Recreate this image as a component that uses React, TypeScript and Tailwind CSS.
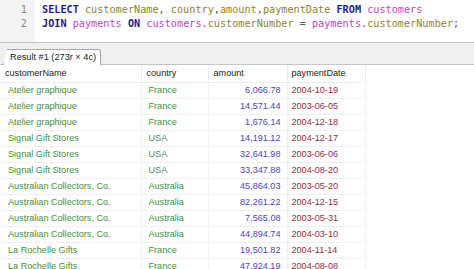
import React from 'react'

type Row = { name: string; country: string; amount: string; date: string }

const rows: Row[] = [
  { name: 'Atelier graphique', country: 'France', amount: '6,066.78', date: '2004-10-19' },
  { name: 'Atelier graphique', country: 'France', amount: '14,571.44', date: '2003-06-05' },
  { name: 'Atelier graphique', country: 'France', amount: '1,676.14', date: '2004-12-18' },
  { name: 'Signal Gift Stores', country: 'USA', amount: '14,191.12', date: '2004-12-17' },
  { name: 'Signal Gift Stores', country: 'USA', amount: '32,641.98', date: '2003-06-06' },
  { name: 'Signal Gift Stores', country: 'USA', amount: '33,347.88', date: '2004-08-20' },
  { name: 'Australian Collectors, Co.', country: 'Australia', amount: '45,864.03', date: '2003-05-20' },
  { name: 'Australian Collectors, Co.', country: 'Australia', amount: '82,261.22', date: '2004-12-15' },
  { name: 'Australian Collectors, Co.', country: 'Australia', amount: '7,565.08', date: '2003-05-31' },
  { name: 'Australian Collectors, Co.', country: 'Australia', amount: '44,894.74', date: '2004-03-10' },
  { name: 'La Rochelle Gifts', country: 'France', amount: '19,501.82', date: '2004-11-14' },
  { name: 'La Rochelle Gifts', country: 'France', amount: '47,924.19', date: '2004-08-08' }
]

const kw = 'font-bold text-[#1c1c8c]'
const id = 'text-[#8c8232]'
const tbl = 'text-[#c23fc2]'
const op = 'text-[#555555]'

function Editor(): JSX.Element {
  return (
    <div className="flex h-[42px] bg-white font-['DejaVu_Sans_Mono',monospace] text-[10.2px] leading-[14px]">
      <div className="w-[35px] bg-[#f3f3f3] pt-[3px] pr-[8px] text-right text-[#8a8a8a]">
        <div>1</div>
        <div>2</div>
      </div>
      <div className="pl-[7px] pt-[3px] whitespace-pre">
        <div>
          <span className={kw}>SELECT</span> <span className={id}>customerName</span>
          <span className={op}>, </span>
          <span className={id}>country</span>
          <span className={op}>,</span>
          <span className={id}>amount</span>
          <span className={op}>,</span>
          <span className={id}>paymentDate</span> <span className={kw}>FROM</span>{' '}
          <span className={tbl}>customers</span>
        </div>
        <div>
          <span className={kw}>JOIN</span> <span className={tbl}>payments</span> <span className={kw}>ON</span>{' '}
          <span className={tbl}>customers</span>
          <span className={op}>.</span>
          <span className={id}>customerNumber</span>
          <span className={op}> = </span>
          <span className={tbl}>payments</span>
          <span className={op}>.</span>
          <span className={id}>customerNumber</span>
          <span className={op}>;</span>
        </div>
      </div>
    </div>
  )
}

function ResultTabs(): JSX.Element {
  return (
    <div className="flex h-[23px] items-end border-t border-b border-[#c6c6c6] bg-[#efefef] pl-[3px]">
      <div className="relative -mb-px flex h-[16px] items-center rounded-tr-[3px] border border-b-0 border-[#a9a9a9] bg-white pl-[6px] pr-[4px] text-[9.2px] text-[#1a1a1a] [clip-path:polygon(4px_0,100%_0,100%_100%,0_100%)]">
        Result #1 (273r × 4c)
      </div>
    </div>
  )
}

export default function App(): JSX.Element {
  return (
    <div className="h-[269px] w-[474px] overflow-hidden bg-white font-['Liberation_Sans',Arial,sans-serif]">
      <Editor />
      <ResultTabs />
      <table className="border-collapse text-[9.1px] leading-[15px]">
        <thead>
          <tr className="h-[17px] text-[#222222]">
            <th className="w-[141px] border-r border-b border-[#ececec] pl-[5px] text-left font-normal">customerName</th>
            <th className="w-[67px] border-r border-b border-[#ececec] pl-[5px] text-left font-normal">country</th>
            <th className="w-[79px] border-r border-b border-[#ececec] pl-[5px] text-left font-normal">amount</th>
            <th className="w-[78px] border-r border-b border-[#ececec] pl-[4px] text-left font-normal">paymentDate</th>
          </tr>
        </thead>
        <tbody>
          {rows.map((r, i) => (
            <tr key={i} className="h-[16px]">
              <td className="border-r border-b border-[#efefef] pl-[8px] text-[#3f8f3a]">{r.name}</td>
              <td className="border-r border-b border-[#efefef] pl-[7px] text-[#3f8f3a]">{r.country}</td>
              <td className="border-r border-b border-[#efefef] pr-[6px] text-right text-[#4e3fb8]">{r.amount}</td>
              <td className="border-r border-b border-[#efefef] pl-[4px] text-[#8b2f3f]">{r.date}</td>
            </tr>
          ))}
        </tbody>
      </table>
    </div>
  )
}
